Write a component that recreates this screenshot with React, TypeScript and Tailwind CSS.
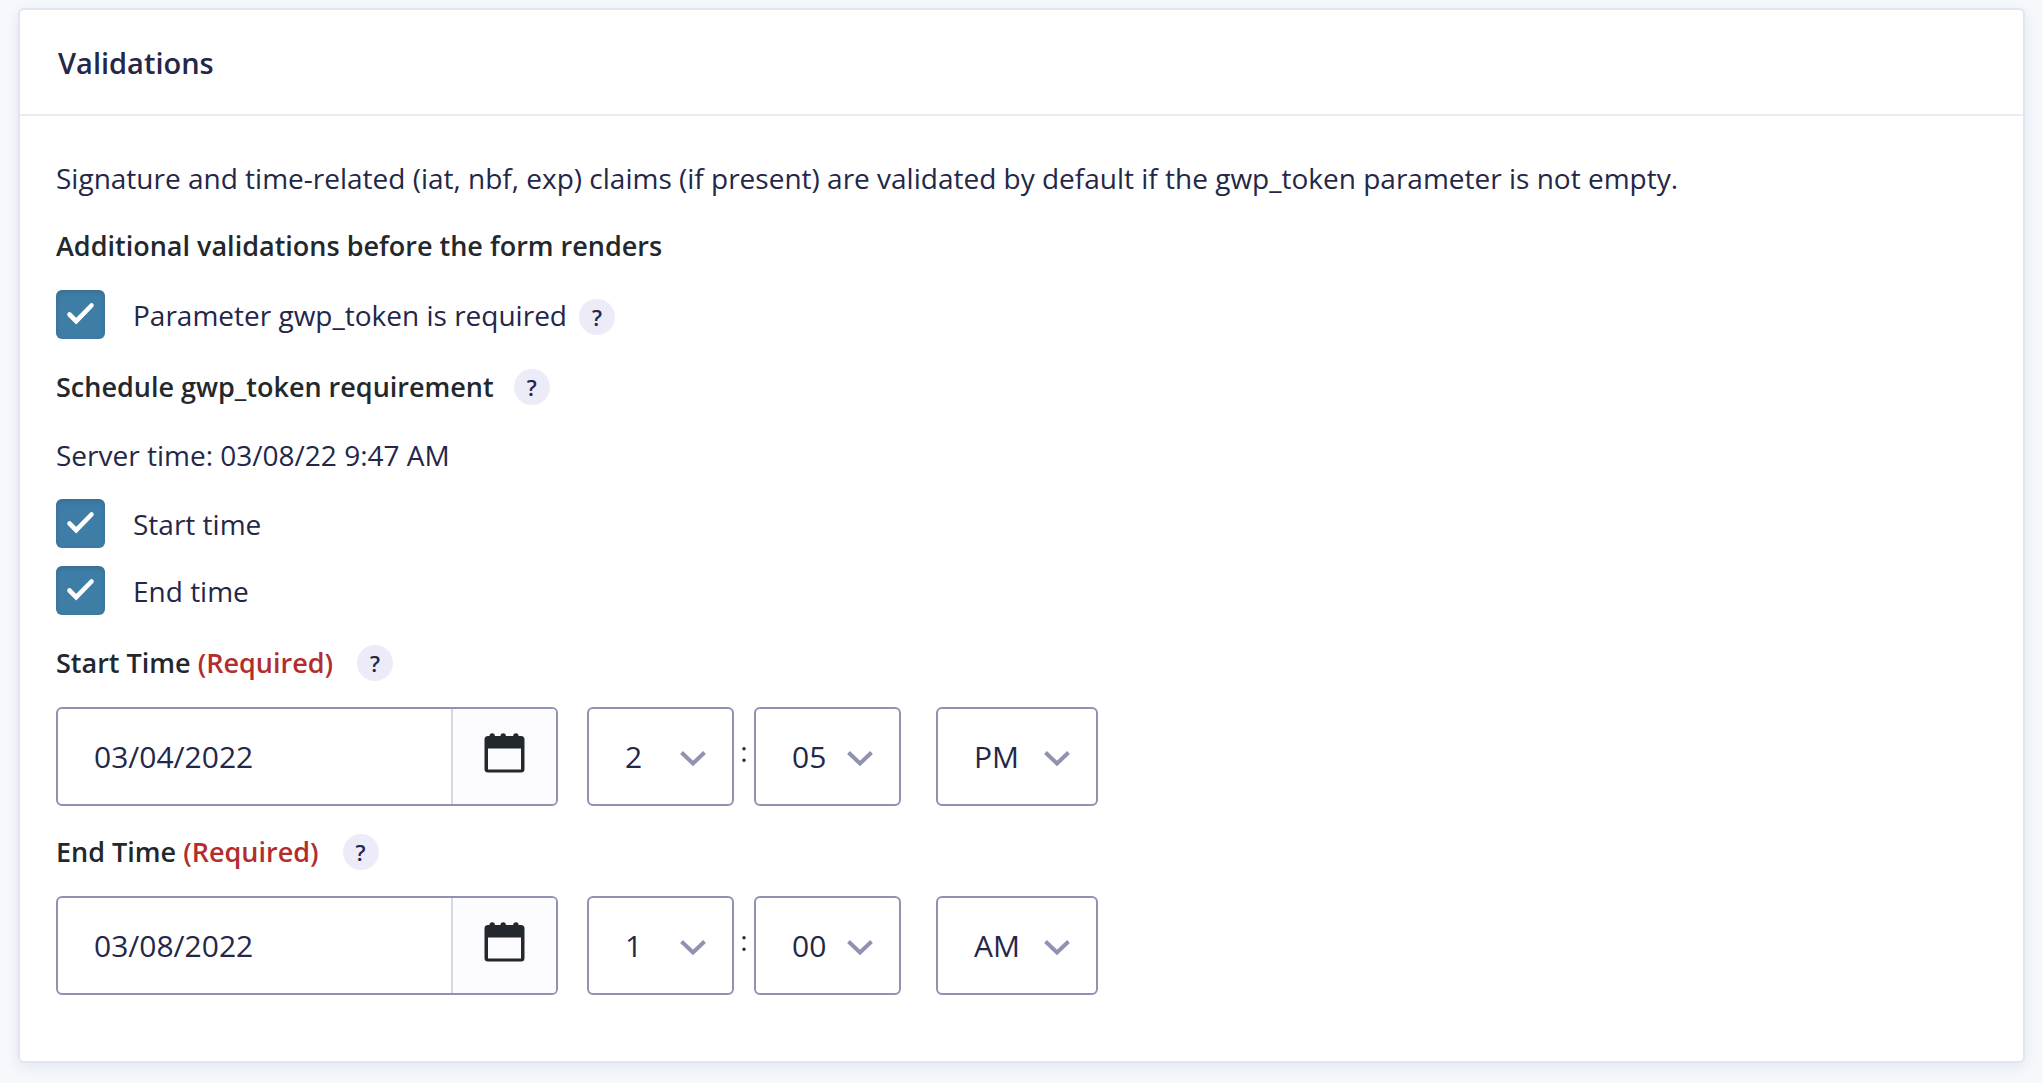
import { useId, useState } from 'react'

const HOURS = ['1', '2', '3', '4', '5', '6', '7', '8', '9', '10', '11', '12']
const MINUTES = ['00', '05', '10', '15', '20', '25', '30', '35', '40', '45', '50', '55']

function HelpButton({ label }: { label: string }) {
  return (
    <button
      type="button"
      aria-label={label}
      className="flex size-9 shrink-0 items-center justify-center rounded-full bg-[#ecebf8] text-[22px] font-semibold text-[#242748]"
    >
      ?
    </button>
  )
}

function Checkbox({ label }: { label: string }) {
  const id = useId()
  return (
    <div className="flex items-center">
      <span className="relative size-[49px] shrink-0">
        <input
          id={id}
          type="checkbox"
          defaultChecked
          className="peer block size-full appearance-none rounded-md border-2 border-[#9092b2] bg-white checked:border-0 checked:bg-[#3e7da6] checked:shadow-[inset_0_2px_5px_rgba(36,39,72,0.2)]"
        />
        <svg
          viewBox="0 0 49 49"
          fill="none"
          stroke="#fff"
          strokeWidth="4.6"
          strokeLinecap="round"
          className="pointer-events-none absolute inset-0 hidden peer-checked:block"
        >
          <path d="M13.500 24.500l6.700 6.700L35.500 15.500" />
        </svg>
      </span>
      <label htmlFor={id} className="pl-7">
        {label}
      </label>
    </div>
  )
}

function CalendarIcon() {
  return (
    <svg width="41" height="41" viewBox="0 0 41 41" fill="#23282d" aria-hidden="true">
      <path
        fillRule="evenodd"
        d="M4 4h1.500a2.700 2.700 0 0 1 5.400 0h5.600a2.700 2.700 0 0 1 5.400 0h7.300a2.700 2.700 0 0 1 5.400 0H37a3.500 3.500 0 0 1 3.500 3.500V37a3.500 3.500 0 0 1-3.500 3.500H4A3.500 3.500 0 0 1 .5 37V7.500A3.500 3.500 0 0 1 4 4zM4 16.500v21h33v-21z"
      />
    </svg>
  )
}

type SelectProps = {
  label: string
  value: string
  options: string[]
  className: string
}

function Select({ label, value, options, className }: SelectProps) {
  return (
    <div className={`relative ${className}`}>
      <select
        aria-label={label}
        defaultValue={value}
        className="block h-[99px] w-full appearance-none rounded-md border-2 border-[#9092b2] bg-white pl-9 text-[30px]"
      >
        {options.map((option) => (
          <option key={option}>{option}</option>
        ))}
      </select>
      <svg
        width="26"
        height="16"
        viewBox="0 0 26 16"
        fill="none"
        stroke="#9092b2"
        strokeWidth="4"
        className="pointer-events-none absolute top-11 right-7"
        aria-hidden="true"
      >
        <path d="M1.500 1.500L13 12.500l11.500-11" />
      </svg>
    </div>
  )
}

type DateTimeProps = {
  label: string
  date: string
  hour: string
  minute: string
  period: string
}

function DateTimeField({ label, date, hour, minute, period }: DateTimeProps) {
  const id = useId()
  const [value, setValue] = useState(date)
  return (
    <div>
      <div className="flex h-10 items-center">
        <label htmlFor={id} className="text-[27px] font-semibold text-[#23282d]">
          {label} <span className="text-[#b32d2e]">(Required)</span>
        </label>
        <span className="pl-6">
          <HelpButton label={`About ${label}`} />
        </span>
      </div>
      <div className="mt-6 flex items-center">
        <div className="flex h-[99px] w-[502px] overflow-hidden rounded-md border-2 border-[#9092b2]">
          <input
            id={id}
            type="text"
            value={value}
            onChange={(e) => setValue(e.target.value)}
            className="min-w-0 flex-1 pl-9 text-[30px] outline-none"
          />
          <button
            type="button"
            aria-label={`Pick ${label}`}
            className="flex w-[105px] items-center justify-center border-l-2 border-[#d5d7e9] bg-[#fcfcff] pb-2"
          >
            <CalendarIcon />
          </button>
        </div>
        <Select label={`${label} hour`} value={hour} options={HOURS} className="ml-[29px] w-[147px]" />
        <span className="w-5 pb-3 text-center">:</span>
        <Select label={`${label} minute`} value={minute} options={MINUTES} className="w-[147px]" />
        <Select label={`${label} AM or PM`} value={period} options={['AM', 'PM']} className="ml-[35px] w-[162px]" />
      </div>
    </div>
  )
}

export default function App() {
  return (
    <div className="min-h-screen bg-[#f5f9fc] px-[18px] pt-2 pb-5 font-['Open_Sans','Noto_Sans',sans-serif] text-[28px] leading-10 text-[#242748]">
      <section className="rounded-md border-2 border-[#e2e5f0] bg-white shadow-[0_4px_16px_rgba(18,25,97,0.08)]">
        <header className="border-b-2 border-[#ebebf2] px-[38px] pt-[33px] pb-[31px]">
          <h2 className="text-[29px] font-semibold">Validations</h2>
        </header>
        <div className="px-9 pt-[42px] pb-[66px]">
          <p>
            Signature and time-related (iat, nbf, exp) claims (if present) are validated by default if the gwp_token
            parameter is not empty.
          </p>
          <h3 className="mt-7 text-[27px] font-semibold text-[#23282d]">Additional validations before the form renders</h3>
          <div className="mt-6 flex items-center">
            <Checkbox label="Parameter gwp_token is required" />
            <span className="pt-1 pl-3">
              <HelpButton label="About the required parameter" />
            </span>
          </div>
          <div className="mt-7 flex h-10 items-center">
            <h3 className="text-[27px] font-semibold text-[#23282d]">Schedule gwp_token requirement</h3>
            <span className="pl-5">
              <HelpButton label="About the schedule" />
            </span>
          </div>
          <p className="mt-7">Server time: 03/08/22 9:47 AM</p>
          <div className="mt-6 flex flex-col gap-[18px]">
            <Checkbox label="Start time" />
            <Checkbox label="End time" />
          </div>
          <div className="mt-7 flex flex-col gap-[26px]">
            <DateTimeField label="Start Time" date="03/04/2022" hour="2" minute="05" period="PM" />
            <DateTimeField label="End Time" date="03/08/2022" hour="1" minute="00" period="AM" />
          </div>
        </div>
      </section>
    </div>
  )
}
